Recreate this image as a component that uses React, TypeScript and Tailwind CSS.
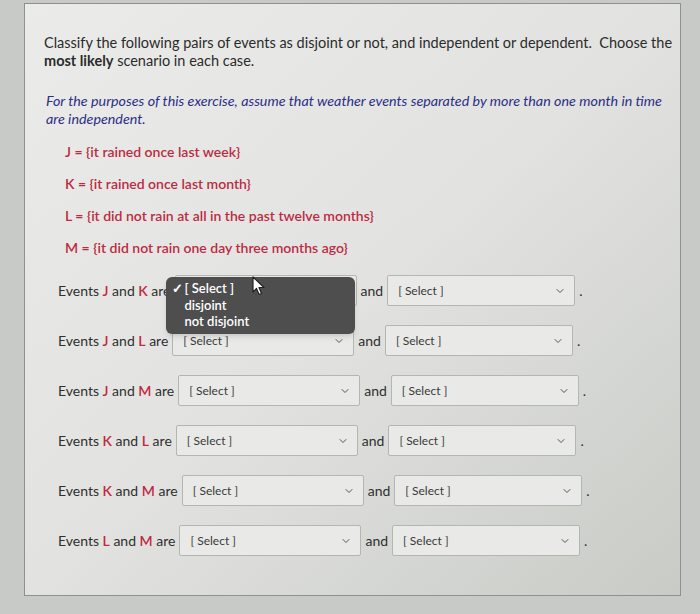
import * as React from 'react';
import { ChevronDown } from 'lucide-react';

const definitions = [
	{ id: 'J', text: '{it rained once last week}' },
	{ id: 'K', text: '{it rained once last month}' },
	{ id: 'L', text: '{it did not rain at all in the past twelve months}' },
	{ id: 'M', text: '{it did not rain one day three months ago}' },
];

const pairs = [
	['J', 'K'],
	['J', 'L'],
	['J', 'M'],
	['K', 'L'],
	['K', 'M'],
	['L', 'M'],
];

const SelectBox = ({ width }: { width: string }) => (
	<div
		className={`${width} h-[31px] flex items-center justify-between pl-[10px] pr-[8px] border border-[#b4b6b2] bg-[#e9eae7] rounded-[2px]`}
	>
		<span className="text-[12px] text-[#3a3a3a]">[ Select ]</span>
		<ChevronDown size={12} strokeWidth={2} className="text-[#555]" />
	</div>
);

const Cursor = () => (
	<svg width="14" height="20" viewBox="0 0 14 20" className="absolute left-[86px] top-[-1px]">
		<path d="M1 1 L1 16 L4.5 12.5 L7 18.5 L9.5 17.5 L7 11.5 L12 11.5 Z" fill="#fff" stroke="#222" strokeWidth="1.2" strokeLinejoin="round" />
	</svg>
);

const Dropdown = () => (
	<div className="absolute left-[-9px] top-[2px] w-[189px] h-[57px] rounded-[6px] bg-[#4d4e4d] shadow-md pt-[3px] text-white text-[13px] font-semibold leading-[16.5px] z-10">
		<div className="flex">
			<span className="w-[19px] pl-[6px]">✓</span>
			<span>[ Select ]</span>
		</div>
		<div className="pl-[19px]">disjoint</div>
		<div className="pl-[19px]">not disjoint</div>
		<Cursor />
	</div>
);

const Letter = ({ id }: { id: string }) => <span className="text-[#c3283f] font-semibold">{id}</span>;

export default function App() {
	return (
		<div className="w-[700px] h-[614px] bg-[#c8cac7] pl-6 pr-[19px] pt-[3px] pb-[18px] font-['Lato',sans-serif]">
			<div className="h-full border border-[#8f918e] bg-linear-to-br from-[#ebece9] via-[#e2e3e0] to-[#c9cbc7] pl-[19px] pt-[30px]">
				<p className="text-[14.5px] leading-[18px] text-[#2b2b2b] w-[636px]">
					Classify the following pairs of events as disjoint or not, and independent or dependent.&nbsp; Choose the{' '}
					<span className="font-bold">most likely</span> scenario in each case.
				</p>
				<p className="mt-[22px] pl-[2px] text-[14.3px] leading-[18px] italic text-[#2c2f86] w-[625px]">
					For the purposes of this exercise, assume that weather events separated by more than one month in time are
					independent.
				</p>
				<div className="mt-[14px] pl-[21px] flex flex-col gap-[13px]">
					{definitions.map((d) => (
						<div key={d.id} className="text-[14px] leading-[19px] font-semibold text-[#bd2a42]">
							{d.id} = {d.text}
						</div>
					))}
				</div>
				<div className="mt-[18px] pl-[14px] flex flex-col gap-[19px]">
					{pairs.map(([a, b], index) => (
						<div key={index} className="flex items-center text-[14px] text-[#2f2f2f]">
							<span className="mr-[4px]">
								Events <Letter id={a} /> and <Letter id={b} /> are
							</span>
							<div className="relative">
								<SelectBox width="w-[182px]" />
								{index === 0 && <Dropdown />}
							</div>
							<span className="mx-[4px]">and</span>
							<SelectBox width="w-[188px]" />
							<span className="ml-[4px]">.</span>
						</div>
					))}
				</div>
			</div>
		</div>
	);
}
